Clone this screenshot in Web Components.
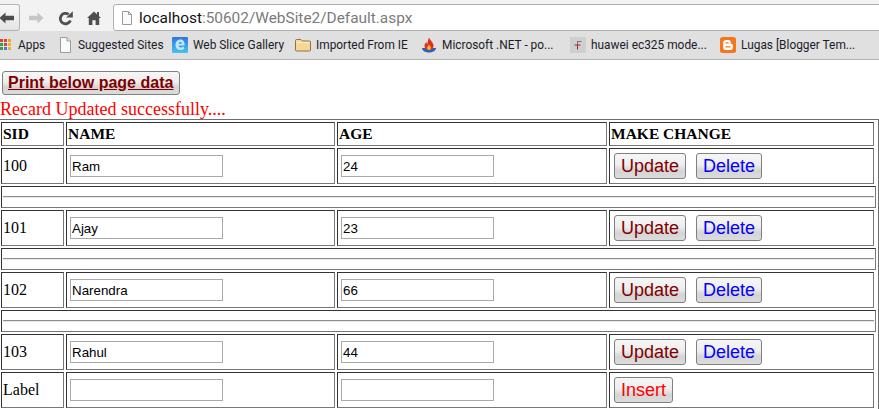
<!DOCTYPE html>
<html>
<head>
<meta charset="utf-8">
<title>Default.aspx</title>
<style>
  html, body { margin: 0; padding: 0; background: #fff; overflow: hidden; }
  body { font-family: "Liberation Serif", serif; font-size: 16px; }
</style>
</head>
<body>

<browser-bar url-host="localhost" url-path=":50602/WebSite2/Default.aspx"></browser-bar>
<bookmarks-bar>
  <bookmark-item icon="apps" width="60" style="margin-left:-3px">Apps</bookmark-item>
  <bookmark-item icon="page" width="115">Suggested Sites</bookmark-item>
  <bookmark-item icon="ie" width="123">Web Slice Gallery</bookmark-item>
  <bookmark-item icon="folder" width="126">Imported From IE</bookmark-item>
  <bookmark-item icon="flame" width="149">Microsoft .NET - po...</bookmark-item>
  <bookmark-item icon="tile" width="150">huawei ec325 mode...</bookmark-item>
  <bookmark-item icon="blogger">Lugas [Blogger Tem...</bookmark-item>
</bookmarks-bar>

<student-page>
  <push-button slot="print" kind="print" color="#800000">Print below page data</push-button>
  <span slot="message">Recard Updated successfully....</span>

  <data-row head>
    <data-cell>SID</data-cell><data-cell>NAME</data-cell><data-cell>AGE</data-cell><data-cell>MAKE CHANGE</data-cell>
  </data-row>
  <student-row sid="100" name="Ram" age="24"></student-row>
  <rule-row></rule-row>
  <student-row sid="101" name="Ajay" age="23"></student-row>
  <rule-row></rule-row>
  <student-row sid="102" name="Narendra" age="66"></student-row>
  <rule-row></rule-row>
  <student-row sid="103" name="Rahul" age="44"></student-row>
  <data-row>
    <data-cell>Label</data-cell>
    <data-cell><text-box></text-box></data-cell>
    <data-cell><text-box></text-box></data-cell>
    <data-cell><push-button color="#ff0000">Insert</push-button></data-cell>
  </data-row>
</student-page>

<script>
const ICONS = {
  apps: `<svg width="16" height="16" viewBox="0 0 16 16">
    ${[['#d9432f','#d9432f','#e8a33a'],['#3f9a4c','#d9432f','#f0b429'],['#3f9a4c','#3f7fd9','#f0b429']].map((row, y) =>
      row.map((c, x) => `<rect x="${x * 4 + 3}" y="${y * 4 + 2}" width="3" height="3" fill="${c}"/>`).join('')).join('')}
  </svg>`,
  page: `<svg width="16" height="16" viewBox="0 0 16 16">
    <path d="M3.5 .5H10L13.5 4V15.5H3.5Z" fill="#fafafa" stroke="#9c9c9c"/><path d="M10 .5V4H13.5" fill="#e6e6e6" stroke="#9c9c9c"/>
  </svg>`,
  ie: `<svg width="16" height="16" viewBox="0 0 16 16">
    <defs><linearGradient id="ie" x1="0" y1="0" x2="0" y2="1"><stop offset="0" stop-color="#2f78dc"/><stop offset="1" stop-color="#45c4ee"/></linearGradient></defs>
    <rect width="16" height="16" rx="1" fill="url(#ie)"/>
    <path d="M3.5 8C3.5 4.6 5.6 2.5 8.4 2.5 11 2.5 12.6 4.4 12.6 7.8V8.6H6.6C6.8 10 7.6 10.7 8.8 10.7 9.8 10.7 10.6 10.3 11.4 9.6L12.4 11.4C11.3 12.5 10 13 8.4 13 5.4 13 3.5 11.2 3.5 8ZM6.6 6.8H9.8C9.7 5.6 9.2 4.9 8.3 4.9 7.4 4.9 6.8 5.6 6.6 6.8Z" fill="#bfe6fb"/>
  </svg>`,
  folder: `<svg width="16" height="16" viewBox="0 0 16 16">
    <path d="M.5 3.5C.5 2.9 1 2.5 1.5 2.5H6L7.5 4H14.5C15 4 15.5 4.4 15.5 5V13C15.5 13.6 15 14 14.5 14H1.5C1 14 .5 13.6 .5 13Z" fill="#f8d695" stroke="#8a7448"/>
    <path d="M1.5 5.5H14.5" stroke="#fff0c8"/>
  </svg>`,
  flame: `<svg width="16" height="16" viewBox="0 0 16 16">
    <path d="M1 11H15C15 14 11 15.5 8 15.5S1 14 1 11Z" fill="#2f5fb8"/>
    <path d="M8 .5C9 3.5 12.5 5 12.5 9 12.5 11.5 10.5 13 8 13S3.5 11.5 3.5 9C3.5 7.2 4.4 6 5.4 5 5.4 6.2 5.9 6.8 6.4 7 6.5 4.8 7.3 2.6 8 .5Z" fill="#e0301e"/>
    <path d="M8 7.5C8.6 8.8 10 9.5 10 11 10 12.2 9.1 13 8 13S6 12.2 6 11C6 9.6 7.4 8.9 8 7.5Z" fill="#f7b42c"/>
  </svg>`,
  tile: `<svg width="16" height="16" viewBox="0 0 16 16">
    <rect width="16" height="16" fill="#cfcfcf"/>
    <path d="M7 4.5H11.5M7.5 4.5V7" stroke="#77777a" fill="none"/><path d="M4.5 8H10.5M7.5 7.5V12.5" stroke="#a6202a" fill="none"/>
  </svg>`,
  blogger: `<svg width="16" height="16" viewBox="0 0 16 16">
    <rect width="16" height="16" rx="2.5" fill="#f4761f"/>
    <path d="M6 3H8.6C10 3 10.8 4 10.8 5.2V6.2C10.8 6.8 11.1 7 11.6 7 12.3 7 12.8 7.4 12.8 8V10.4C12.8 12 11.6 13 10.2 13H6C4.4 13 3.2 12 3.2 10.4V5.6C3.2 4 4.4 3 6 3Z" fill="#fff"/>
    <rect x="5.4" y="5.2" width="3.4" height="1.4" rx=".7" fill="#f4761f"/><rect x="5.4" y="9.2" width="5.2" height="1.4" rx=".7" fill="#f4761f"/>
  </svg>`
};

class BrowserBar extends HTMLElement {
  constructor() {
    super();
    this.attachShadow({ mode: 'open' });
  }
  connectedCallback() {
    this.shadowRoot.innerHTML = `
      <style>
        :host { display: flex; align-items: flex-start; height: 31px; box-sizing: border-box; background: #f2f2f2; overflow: hidden; }
        .back { width: 21px; height: 27px; margin: 4px 0 0 -1px; box-sizing: border-box; border: 1px solid #b4b4b4; border-left: 0; border-radius: 0 3px 3px 0; background: linear-gradient(#f8f8f8, #e4e4e4); display: flex; align-items: center; padding-top: 1px; }
        .tools { display: flex; align-items: center; height: 27px; margin-top: 4px; gap: 14px; padding: 1px 0 0 9px; width: 93px; box-sizing: border-box; }
        .addr { flex: 1; height: 27px; margin: 4px -6px 0 0; box-sizing: border-box; border: 1px solid #b0b0b0; border-radius: 3px 0 0 3px; background: #fff; display: flex; align-items: center; padding-left: 7px; gap: 6px; }
        .url { font: 15.4px Roboto, sans-serif; color: #7b7b7b; white-space: nowrap; }
        .url b { font-weight: 400; color: #111; }
      </style>
      <div class="back">
        <svg width="16" height="12" viewBox="0 0 16 12"><path d="M.5 6L6.5 .5V3.8H15V8.2H6.5V11.5Z" fill="#4d4d4d"/></svg>
      </div>
      <div class="tools">
        <svg width="15" height="12" viewBox="0 0 15 12"><path d="M14.5 6L8.5 .5V3.8H0V8.2H8.5V11.5Z" fill="#c6c6c6"/></svg>
        <svg width="15" height="15" viewBox="0 0 15 15"><path d="M12.4 9.4A5.2 5.2 0 1 1 10.6 3.4" fill="none" stroke="#4f4f4f" stroke-width="2.8"/><path d="M8.2 6.6L14.8 6.6 14.8 .2Z" fill="#4f4f4f"/></svg>
        <svg width="14" height="14" viewBox="0 0 14 14"><path d="M7 .5L14 7H12.2V14H8.6V9.2H5.4V14H1.8V7H0Z" fill="#4f4f4f"/><rect x="10" y="1" width="2" height="4" fill="#4f4f4f"/></svg>
      </div>
      <div class="addr">
        <svg width="12" height="16" viewBox="0 0 12 16"><path d="M1.5 1.5H7.5L10.5 4.5V14.5H1.5Z" fill="#fafafa" stroke="#9a9a9a"/><path d="M7.5 1.5V4.5H10.5" fill="none" stroke="#9a9a9a"/></svg>
        <span class="url"><b>${this.getAttribute('url-host')}</b>${this.getAttribute('url-path')}</span>
      </div>`;
  }
}
customElements.define('browser-bar', BrowserBar);

class BookmarksBar extends HTMLElement {
  constructor() {
    super();
    this.attachShadow({ mode: 'open' }).innerHTML = `
      <style>
        :host { display: flex; align-items: center; height: 29px; box-sizing: border-box; background: #e0e0e0; border-bottom: 1px solid #b3b3b3; overflow: hidden; }
      </style>
      <slot></slot>`;
  }
}
customElements.define('bookmarks-bar', BookmarksBar);

class BookmarkItem extends HTMLElement {
  constructor() {
    super();
    this.attachShadow({ mode: 'open' });
  }
  connectedCallback() {
    const w = this.getAttribute('width');
    this.shadowRoot.innerHTML = `
      <style>
        :host { display: flex; flex: none; align-items: center; gap: 5px; box-sizing: border-box; ${w ? `width: ${w}px;` : ''} white-space: nowrap; font: 11.9px Roboto, sans-serif; color: #1c1c28; }
        svg { flex: none; display: block; }
      </style>
      ${ICONS[this.getAttribute('icon')]}<slot></slot>`;
  }
}
customElements.define('bookmark-item', BookmarkItem);

class StudentPage extends HTMLElement {
  constructor() {
    super();
    this.attachShadow({ mode: 'open' }).innerHTML = `
      <style>
        :host { display: block; padding-top: 11px; }
        .print { padding-left: 2px; height: 24px; }
        .msg { color: #ff0000; font: 18px/22px "Liberation Serif", serif; height: 21px; margin-top: 3px; white-space: nowrap; }
        .table { display: flex; flex-direction: column; gap: 2px; width: 879px; padding: 2px 0 0 1px; box-sizing: border-box; border-top: 1px solid #6e6e6e; border-right: 1px solid #6e6e6e; height: 291px; }
      </style>
      <div class="print"><slot name="print"></slot></div>
      <div class="msg"><slot name="message"></slot></div>
      <div class="table"><slot></slot></div>`;
  }
}
customElements.define('student-page', StudentPage);

class DataRow extends HTMLElement {
  constructor() {
    super();
    this.attachShadow({ mode: 'open' }).innerHTML = `
      <style>
        :host { display: grid; grid-template-columns: 63px 269px 270px 265px; gap: 2px; height: 36px; }
        :host([head]) { height: 24px; font-weight: 700; font-size: 15.5px; }
      </style>
      <slot></slot>`;
  }
}
customElements.define('data-row', DataRow);

class DataCell extends HTMLElement {
  constructor() {
    super();
    this.attachShadow({ mode: 'open' }).innerHTML = `
      <style>
        :host { display: flex; align-items: center; box-sizing: border-box; padding: 0 1px; border: 1px solid; border-color: #333 #777 #777 #333; white-space: nowrap; }
      </style>
      <slot></slot>`;
  }
}
customElements.define('data-cell', DataCell);

class StudentRow extends HTMLElement {
  constructor() {
    super();
    this.attachShadow({ mode: 'open' });
  }
  connectedCallback() {
    this.shadowRoot.innerHTML = `
      <style>:host { display: block; }</style>
      <data-row>
        <data-cell>${this.getAttribute('sid')}</data-cell>
        <data-cell><text-box value="${this.getAttribute('name')}"></text-box></data-cell>
        <data-cell><text-box value="${this.getAttribute('age')}"></text-box></data-cell>
        <data-cell>
          <push-button color="#800000">Update</push-button>
          <push-button color="#0000ff" style="margin-left:10px">Delete</push-button>
        </data-cell>
      </data-row>`;
  }
}
customElements.define('student-row', StudentRow);

class RuleRow extends HTMLElement {
  constructor() {
    super();
    this.attachShadow({ mode: 'open' }).innerHTML = `
      <style>
        :host { display: flex; align-items: center; box-sizing: border-box; width: 875px; height: 22px; padding: 0 1px; border: 1px solid; border-color: #333 #777 #777 #333; }
        hr { flex: 1; margin: 0; height: 0; border: 0; border-top: 1px solid #8e8e8e; border-bottom: 1px solid #e6e6e6; }
      </style>
      <hr>`;
  }
}
customElements.define('rule-row', RuleRow);

class TextBox extends HTMLElement {
  constructor() {
    super();
    this.attachShadow({ mode: 'open' });
  }
  connectedCallback() {
    this.shadowRoot.innerHTML = `
      <style>
        :host { display: block; margin-left: 2px; }
        input { display: block; width: 153px; height: 22px; box-sizing: border-box; margin: 0; padding: 1px; border: 1px solid #a9a9a9; background: #fff; color: #000; font: 13.33px "Liberation Sans", sans-serif; outline: none; }
      </style>
      <input type="text" value="${this.getAttribute('value') || ''}">`;
  }
}
customElements.define('text-box', TextBox);

class PushButton extends HTMLElement {
  constructor() {
    super();
    this.attachShadow({ mode: 'open' });
  }
  connectedCallback() {
    const print = this.getAttribute('kind') === 'print';
    this.shadowRoot.innerHTML = `
      <style>
        :host { display: inline-block; margin-left: ${print ? 0 : 3}px; }
        button { display: block; box-sizing: border-box; height: ${print ? 24 : 26}px; margin: 0; padding: ${print ? '0 6px 0 5px' : '0 6px'}; border: 1px solid #808080; border-radius: 3px; background: linear-gradient(#f6f6f6, #eeeeee 45%, #d4d4d4 70%, #dcdcdc); color: ${this.getAttribute('color')}; font: ${print ? '700 16px' : '18px'} "Liberation Sans", sans-serif; ${print ? 'text-decoration: underline;' : ''} white-space: nowrap; }
      </style>
      <button type="button"><slot></slot></button>`;
  }
}
customElements.define('push-button', PushButton);
</script>
</body>
</html>
